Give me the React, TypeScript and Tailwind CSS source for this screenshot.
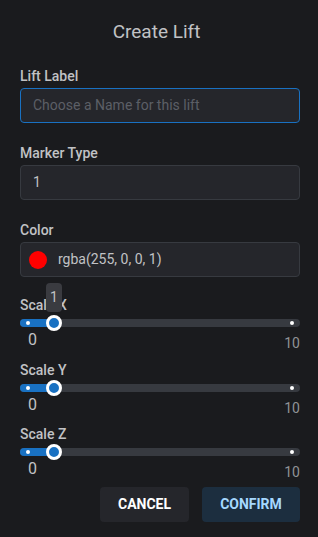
import React from "react";

function Field({ label, children }: { label: string; children: React.ReactNode }) {
  return (
    <div className="flex flex-col">
      <div className="h-[22px] leading-[22px] text-[14px] font-medium text-[#c1c2c5]">{label}</div>
      <div className="mt-[1px]">{children}</div>
    </div>
  );
}

function SliderBlock({ label, showTooltip }: { label: string; showTooltip?: boolean }) {
  return (
    <div className="flex flex-col">
      <div className="h-[22px] leading-[22px] text-[14px] font-medium text-[#c1c2c5]">{label}</div>
      <div className="relative h-[14px]">
        <div className="absolute left-0 right-0 top-[3px] h-[8px] rounded-full bg-[#373a40]" />
        <div className="absolute left-0 top-[3px] h-[8px] w-[34px] rounded-l-full bg-[#1971c2]" />
        <div className="absolute left-[6px] top-[5px] h-[4px] w-[4px] rounded-full bg-white" />
        <div className="absolute right-[6px] top-[5px] h-[4px] w-[4px] rounded-full bg-white" />
        <div className="absolute left-[26px] top-[-1px] h-[16px] w-[16px] rounded-full border-[3px] border-white bg-[#1971c2]" />
        {showTooltip && (
          <div className="absolute left-[26px] top-[-33px] flex h-[29px] w-[16px] items-center justify-center rounded-[4px] bg-[#3a3b40] text-[14px] text-[#c1c2c5]">
            1
          </div>
        )}
      </div>
      <div className="flex h-[22px] items-start justify-between pl-[8px]">
        <span className="mt-[1px] text-[16px] leading-[18px] text-[#c1c2c5]">0</span>
        <span className="mt-[4px] text-[14px] leading-[18px] text-[#909296]">10</span>
      </div>
    </div>
  );
}

export default function App() {
  return (
    <div
      className="h-[537px] w-[318px] bg-[#1a1b1e] pl-[20px] pr-[18px]"
      style={{ fontFamily: "Roboto, 'Noto Sans', sans-serif" }}
    >
      <div className="pr-[7px] pt-[18px] text-center text-[19px] leading-[28px] text-[#c1c2c5]">Create Lift</div>

      <div className="mt-[19px]">
        <Field label="Lift Label">
          <div className="flex h-[35px] items-center rounded-[4px] border border-[#1971c2] bg-[#25262b] px-[12px] text-[14px] text-[#5c5f66]">
            Choose a Name for this lift
          </div>
        </Field>
      </div>

      <div className="mt-[19px]">
        <Field label="Marker Type">
          <div className="flex h-[35px] items-center rounded-[4px] border border-[#373a40] bg-[#25262b] px-[12px] text-[14px] text-[#c1c2c5]">
            1
          </div>
        </Field>
      </div>

      <div className="mt-[19px]">
        <Field label="Color">
          <div className="flex h-[35px] items-center rounded-[4px] border border-[#373a40] bg-[#25262b] pl-[8px] text-[14px] text-[#c1c2c5]">
            <span className="h-[18px] w-[18px] rounded-full bg-[#ff0000]" />
            <span className="ml-[11px]">rgba(255, 0, 0, 1)</span>
          </div>
        </Field>
      </div>

      <div className="mt-[17px]">
        <SliderBlock label="Scale X" showTooltip />
      </div>
      <div className="mt-[6.5px]">
        <SliderBlock label="Scale Y" />
      </div>
      <div className="mt-[6.5px]">
        <SliderBlock label="Scale Z" />
      </div>

      <div className="mt-[6px] flex justify-end gap-[13px]">
        <button className="flex h-[35px] w-[89px] items-center justify-center rounded-[4px] bg-[#25262b] text-[14px] font-bold text-white">
          CANCEL
        </button>
        <button className="flex h-[35px] w-[98px] items-center justify-center rounded-[4px] bg-[#1c2e3f] text-[14px] font-bold text-[#a5d8ff]">
          CONFIRM
        </button>
      </div>
    </div>
  );
}
